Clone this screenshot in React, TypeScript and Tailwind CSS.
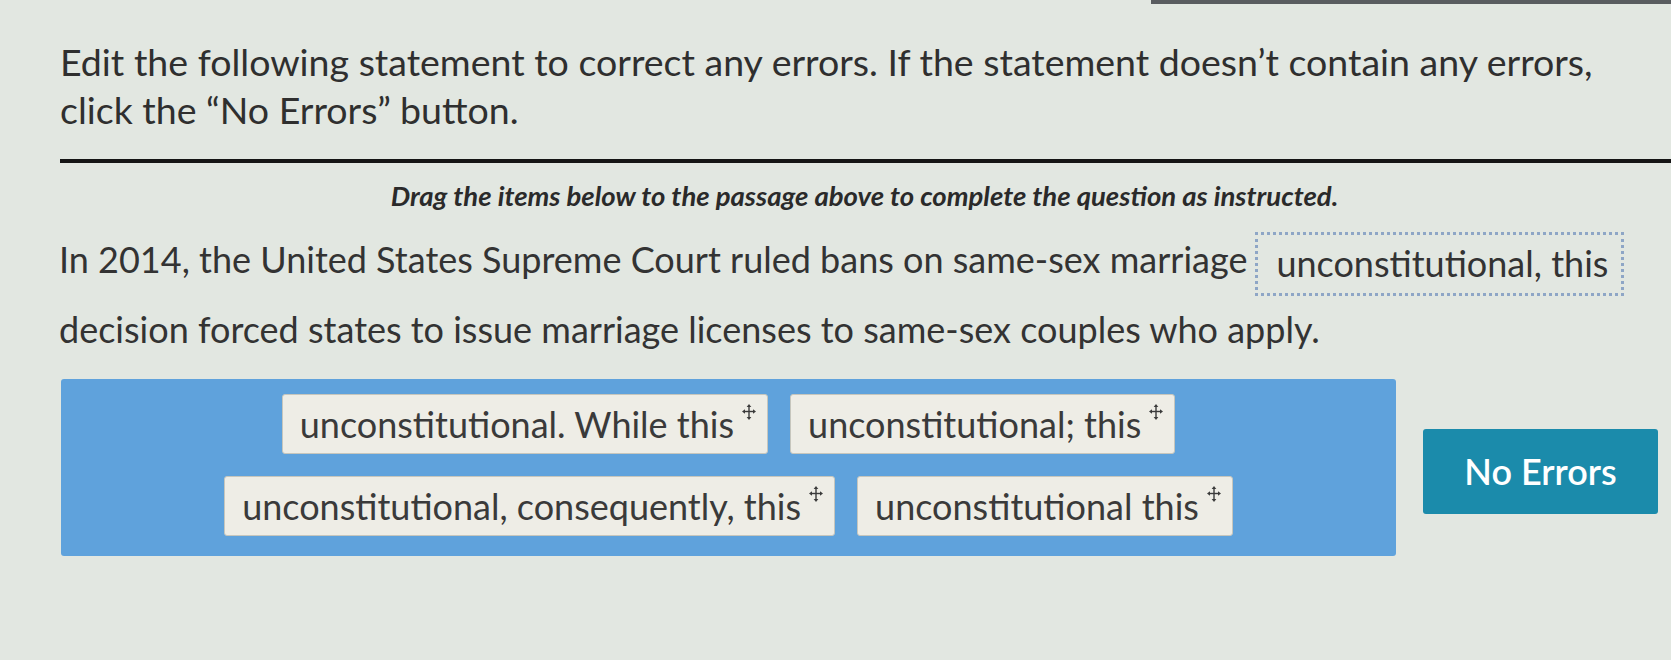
import React from 'react';

const items = [
  ['unconstitutional. While this', 'unconstitutional; this'],
  ['unconstitutional, consequently, this', 'unconstitutional this'],
];

// four-way move handle shown on each draggable chip
function MoveIcon() {
  return (
    <svg width="14" height="16" viewBox="0 0 14 16" fill="#3b3b3b">
      <rect x="6.3" y="2" width="1.4" height="12" />
      <rect x="2" y="6.8" width="10" height="1.4" />
      <path d="M7 0 9.3 3H4.7z" />
      <path d="M7 16 9.3 13H4.7z" />
      <path d="M0 7.5 3 5.3v4.4z" />
      <path d="M14 7.5 11 5.3v4.4z" />
    </svg>
  );
}

function DragItem({ label }: { label: string }) {
  return (
    <div className="flex h-[60px] items-center rounded-[3px] border border-[#c6c6bd] bg-[#eeede6] pl-[17px] pr-[11px] text-[36px] text-[#3a3a3a]">
      <span>{label}</span>
      <span className="ml-[8px] -mt-[24px]">
        <MoveIcon />
      </span>
    </div>
  );
}

export default function App() {
  return (
    <div className="min-h-[660px] w-[1671px] overflow-hidden bg-[#e2e7e1] font-['Lato','Noto_Sans',sans-serif] text-[#333]">
      <div className="flex justify-end">
        <div className="h-[4px] w-[520px] bg-[#5a5d60]" />
      </div>

      {/* Prompt */}
      <div className="pl-[60px] pt-[34px]">
        <p className="w-[1600px] text-[37.5px] leading-[48px] text-[#2f2f2f]">
          Edit the following statement to correct any errors. If the statement doesn’t contain any errors, click the “No Errors” button.
        </p>
        <div className="mt-[25px] h-[4px] bg-[#151515]" />
      </div>

      {/* Instructions */}
      <p className="mt-[15px] w-full pl-[58px] text-center text-[27.5px] leading-[36px] font-bold italic text-[#2a2a2a]">
        Drag the items below to the passage above to complete the question as instructed.
      </p>

      {/* Passage */}
      <p className="mt-[12px] w-full pl-[59px] pr-[20px] text-[36px] leading-[66px] text-[#333]">
        In 2014, the United States Supreme Court ruled bans on same-sex marriage
        <span className="ml-[8px] mr-[10px] inline-block h-[64px] border-[3px] border-dotted border-[#8ea6c6] pl-[18px] pr-[13px] align-middle leading-[56px]">
          unconstitutional, this
        </span>
        decision forced states to issue marriage licenses to same-sex couples who apply.
      </p>

      {/* Answer bank */}
      <div className="mt-[17px] flex items-center pl-[61px]">
        <div className="flex w-[1335px] flex-col items-center gap-[22px] rounded-[3px] bg-[#5fa2dc] pt-[15px] pb-[20px]">
          {items.map((row, i) => (
            <div key={i} className="flex gap-[22px]">
              {row.map((label) => (
                <DragItem key={label} label={label} />
              ))}
            </div>
          ))}
        </div>
        <button className="ml-[27px] mt-[8px] flex h-[85px] w-[235px] items-center justify-center rounded-[3px] bg-[#1b8bab] text-[36px] font-semibold text-white">
          No Errors
        </button>
      </div>
    </div>
  );
}
